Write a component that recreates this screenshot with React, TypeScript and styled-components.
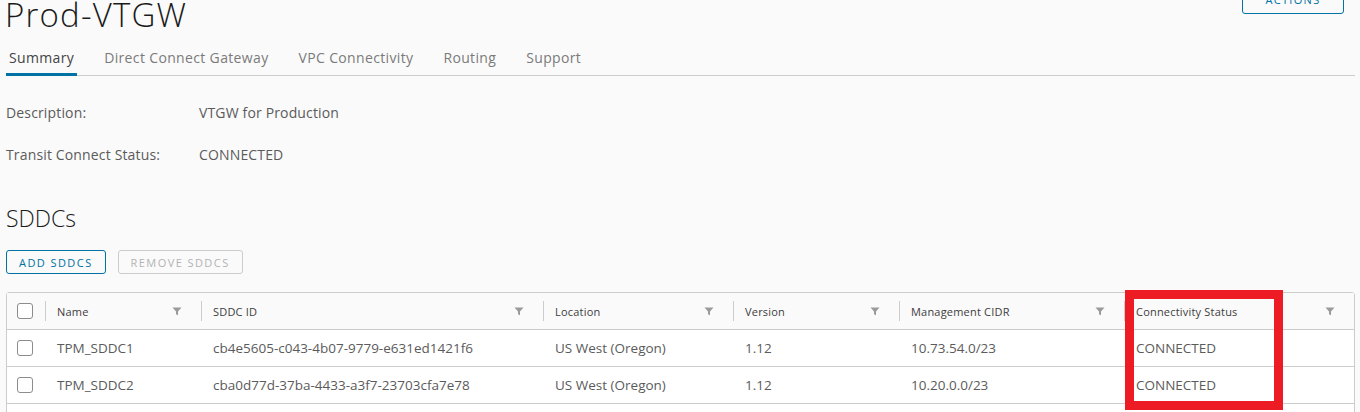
import styled, { createGlobalStyle } from 'styled-components';

const GlobalStyle = createGlobalStyle`
    html, body {
        margin: 0;
        background: #fafafa;
        font-family: "Open Sans", "Liberation Sans", sans-serif;
        overflow: hidden;
    }
`;

const Page = styled.div`
    position: relative;
    width: 1360px;
    height: 412px;
    box-sizing: border-box;
    padding: 0 5px 0 6px;
    overflow: hidden;
`;

const Header = styled.header`
    display: flex;
    justify-content: space-between;
    align-items: flex-start;
    height: 39px;
`;

const Title = styled.h1`
    margin: 0 0 0 -1px;
    font-size: 33px;
    line-height: 30px;
    font-weight: 300;
    letter-spacing: 1.2px;
    color: #1b1b1b;
`;

const ActionsButton = styled.button`
    margin: -16px 11px 0 0;
    width: 102px;
    height: 30px;
    border: 1px solid #0072a3;
    border-radius: 3px;
    background: transparent;
    color: #0072a3;
    font-family: inherit;
    font-size: 11px;
    font-weight: 500;
    letter-spacing: 0.12em;
`;

const TabBar = styled.nav`
    display: flex;
    gap: 24px;
    height: 36px;
    border-bottom: 1px solid #cccccc;
`;

const Tab = styled.div<{ $active?: boolean }>`
    display: flex;
    align-items: center;
    padding: 3px 3px 0;
    margin-bottom: -1px;
    border-bottom: 3px solid ${p => (p.$active ? '#0072a3' : 'transparent')};
    font-size: 14px;
    letter-spacing: 0.35px;
    color: ${p => (p.$active ? '#444444' : '#7a7a7a')};
`;

const DetailList = styled.dl`
    margin: 15px 0 0;
`;

const DetailRow = styled.div`
    display: flex;
    align-items: center;
    height: 42px;
    font-size: 14px;
    letter-spacing: 0.15px;
    color: #5b5b5b;
`;

const DetailLabel = styled.dt`
    width: 193px;
`;

const DetailValue = styled.dd`
    margin: 0;
`;

const SectionTitle = styled.h2`
    margin: 28px 0 0;
    font-size: 23px;
    line-height: 30px;
    font-weight: 300;
    color: #1b1b1b;
`;

const ButtonRow = styled.div`
    display: flex;
    gap: 12px;
    margin-top: 17px;
`;

const OutlineButton = styled.button<{ $disabled?: boolean }>`
    height: 24px;
    padding: 0 12px;
    border: 1px solid ${p => (p.$disabled ? '#cccccc' : '#0072a3')};
    border-radius: 3px;
    background: transparent;
    color: ${p => (p.$disabled ? '#b3b3b3' : '#0072a3')};
    font-family: inherit;
    font-size: 11px;
    font-weight: 500;
    letter-spacing: 0.13em;
`;

const Grid = styled.div`
    margin-top: 18px;
    border: 1px solid #cccccc;
    border-radius: 3px;
    background: #ffffff;
`;

const columns = '38px 156px 342px 190px 166px 225px 1fr';

const HeaderRow = styled.div`
    display: grid;
    grid-template-columns: ${columns};
    height: 36px;
    border-bottom: 1px solid #cccccc;
    background: #fafafa;
`;

const Row = styled.div`
    display: grid;
    grid-template-columns: ${columns};
    height: 36px;
    border-bottom: 1px solid #cccccc;
`;

const HeaderCell = styled.div`
    display: flex;
    align-items: center;
    padding-right: 19px;
    font-size: 11px;
    font-weight: 500;
    letter-spacing: 0.2px;
    color: #3d3d3d;
`;

const Divider = styled.span`
    width: 1px;
    height: 20px;
    background: #cccccc;
`;

const HeaderLabel = styled.span`
    flex: 1;
    margin-left: 11px;
`;

const CheckCell = styled.div`
    display: flex;
    align-items: center;
    padding-left: 10px;
`;

const Cell = styled.div`
    display: flex;
    align-items: center;
    padding-left: 12px;
    font-size: 13.5px;
    color: #5b5b5b;
    white-space: nowrap;
`;

const Checkbox = styled.span`
    width: 16px;
    height: 16px;
    box-sizing: border-box;
    border: 1px solid #8c8c8c;
    border-radius: 3px;
    background: #ffffff;
`;

const Footer = styled.div`
    height: 40px;
`;

// annotation drawn over the screenshot
const Highlight = styled.div`
    position: absolute;
    left: 1125px;
    top: 290px;
    width: 158px;
    height: 120px;
    box-sizing: border-box;
    border: 9px solid #ed1c24;
    pointer-events: none;
`;

const FilterIcon = () => (
    <svg width="10" height="10" viewBox="0 0 10 10">
        <path d="M0.5 1.5h9L6 5.6V9.2L4 8.2V5.6z" fill="#9a9a9a" />
    </svg>
);

const headers = ['Name', 'SDDC ID', 'Location', 'Version', 'Management CIDR', 'Connectivity Status'];

const sddcs = [
    { name: 'TPM_SDDC1', id: 'cb4e5605-c043-4b07-9779-e631ed1421f6', location: 'US West (Oregon)', version: '1.12', cidr: '10.73.54.0/23', status: 'CONNECTED' },
    { name: 'TPM_SDDC2', id: 'cba0d77d-37ba-4433-a3f7-23703cfa7e78', location: 'US West (Oregon)', version: '1.12', cidr: '10.20.0.0/23', status: 'CONNECTED' },
];

const tabs = ['Summary', 'Direct Connect Gateway', 'VPC Connectivity', 'Routing', 'Support'];

export default function App() {
    return (
        <>
            <GlobalStyle />
            <Page>
                <Header>
                    <Title>Prod-VTGW</Title>
                    <ActionsButton>ACTIONS</ActionsButton>
                </Header>

                <TabBar>
                    {tabs.map((t, i) => (
                        <Tab key={t} $active={i === 0}>{t}</Tab>
                    ))}
                </TabBar>

                <DetailList>
                    <DetailRow>
                        <DetailLabel>Description:</DetailLabel>
                        <DetailValue>VTGW for Production</DetailValue>
                    </DetailRow>
                    <DetailRow>
                        <DetailLabel>Transit Connect Status:</DetailLabel>
                        <DetailValue>CONNECTED</DetailValue>
                    </DetailRow>
                </DetailList>

                <SectionTitle>SDDCs</SectionTitle>
                <ButtonRow>
                    <OutlineButton>ADD SDDCS</OutlineButton>
                    <OutlineButton $disabled>REMOVE SDDCS</OutlineButton>
                </ButtonRow>

                <Grid>
                    <HeaderRow>
                        <CheckCell><Checkbox /></CheckCell>
                        {headers.map(h => (
                            <HeaderCell key={h}>
                                <Divider />
                                <HeaderLabel>{h}</HeaderLabel>
                                <FilterIcon />
                            </HeaderCell>
                        ))}
                    </HeaderRow>
                    {sddcs.map(s => (
                        <Row key={s.id}>
                            <CheckCell><Checkbox /></CheckCell>
                            <Cell>{s.name}</Cell>
                            <Cell>{s.id}</Cell>
                            <Cell>{s.location}</Cell>
                            <Cell>{s.version}</Cell>
                            <Cell>{s.cidr}</Cell>
                            <Cell>{s.status}</Cell>
                        </Row>
                    ))}
                    <Footer />
                </Grid>

                <Highlight />
            </Page>
        </>
    );
}
